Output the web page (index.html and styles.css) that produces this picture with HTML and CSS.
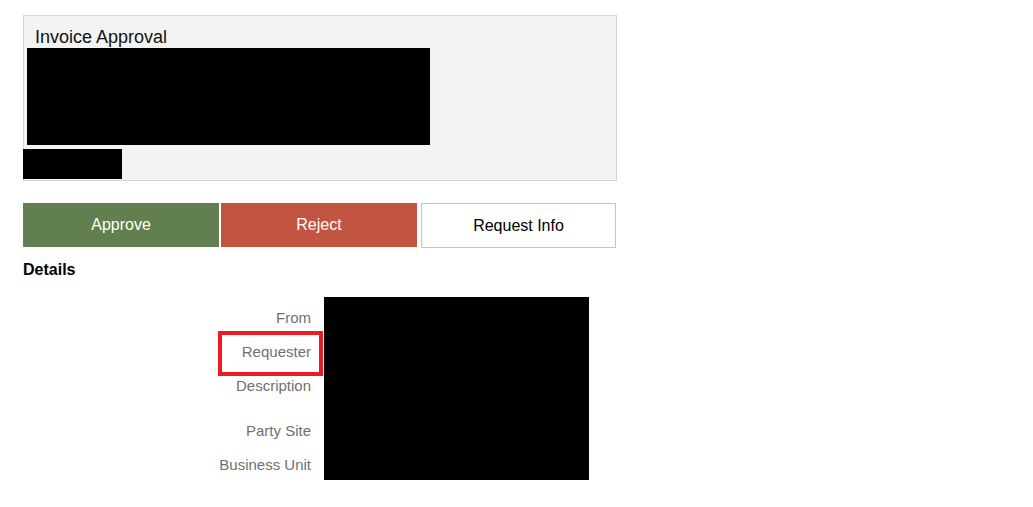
FILE: index.html
```html
<!DOCTYPE html>
<html lang="en">
<head>
<meta charset="utf-8">
<title>Invoice Approval</title>
<link rel="stylesheet" href="styles.css">
</head>
<body>
<div class="page">
  <div class="header">
    <div class="title">Invoice Approval</div>
    <div class="redact redact-main"></div>
    <div class="redact redact-sub"></div>
  </div>
  <div class="actions">
    <button class="btn btn-approve">Approve</button>
    <button class="btn btn-reject">Reject</button>
    <button class="btn btn-info">Request Info</button>
  </div>
  <div class="section-title">Details</div>
  <div class="details">
    <div class="label r1">From</div>
    <div class="label r2 highlighted">Requester<span class="annotation"></span></div>
    <div class="label r3">Description</div>
    <div class="label r4">Party Site</div>
    <div class="label r5">Business Unit</div>
    <div class="redact redact-values"></div>
  </div>
</div>
</body>
</html>
```
FILE: styles.css
```css
html, body {
  margin: 0;
  padding: 0;
  background: #ffffff;
}
body {
  font-family: "Liberation Sans", Arial, Helvetica, sans-serif;
  color: #000000;
}
.page {
  padding: 15px 0 0 23px;
  width: 594px;
}
.header {
  border: 1px solid #d4d4d4;
  background: #f3f3f3;
  padding: 11px 0 1px 0;
  display: flex;
  flex-direction: column;
  align-items: flex-start;
}
.title {
  font-size: 18px;
  line-height: 21px;
  padding-left: 11px;
  color: #111111;
}
.redact {
  background: #000000;
}
.redact-main {
  width: 403px;
  height: 97px;
  margin-left: 3px;
}
.redact-sub {
  width: 99px;
  height: 30px;
  margin-top: 4px;
  margin-left: -1px;
}
.actions {
  display: flex;
  margin-top: 22px;
  align-items: flex-start;
}
.btn {
  font-family: inherit;
  font-size: 16px;
  border: none;
  margin: 0;
  padding: 0;
  height: 44px;
  cursor: pointer;
}
.btn-approve {
  width: 196px;
  background: #617f4f;
  color: #ffffff;
}
.btn-reject {
  width: 196px;
  margin-left: 2px;
  background: #c25542;
  color: #ffffff;
}
.btn-info {
  width: 195px;
  height: 45px;
  margin-left: 4px;
  background: #ffffff;
  border: 1px solid #c4c4c4;
  color: #000000;
}
.section-title {
  font-size: 16px;
  font-weight: bold;
  line-height: 18px;
  margin-top: 13px;
}
.details {
  margin-top: 18px;
  display: grid;
  grid-template-columns: 301px 265px;
  grid-template-rows: 38px 34px 45px 34px 34px;
}
.label {
  grid-column: 1;
  font-size: 15px;
  line-height: 34px;
  color: #707070;
  text-align: right;
  padding-right: 13px;
  position: relative;
}
.r1 { grid-row: 1; align-self: end; }
.r2 { grid-row: 2; align-self: start; }
.r3 { grid-row: 3; align-self: start; }
.r4 { grid-row: 4; align-self: start; }
.r5 { grid-row: 5; align-self: start; }
.annotation {
  position: absolute;
  left: 195px;
  top: -4px;
  width: 97px;
  height: 37px;
  border: 4px solid #ed1c24;
}
.redact-values {
  grid-column: 2;
  grid-row: 1 / -1;
  height: 183px;
  align-self: start;
}
```
